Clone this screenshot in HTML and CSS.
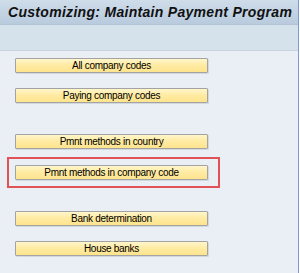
FILE: index.html
```
<!doctype html>
<html lang="en">
	<head>
		<meta charset="UTF-8" />
		<title>Customizing: Maintain Payment Program</title>
		<link rel="stylesheet" href="styles.css">
	</head>
	<body>
		<section class="window">
			<header class="title-bar">
				<h1>Customizing: Maintain Payment Program</h1>
			</header>
			<div class="toolbar"></div>
			<div class="content">
				<button class="btn first">All company codes</button>
				<button class="btn second">Paying company codes</button>
				<button class="btn group">Pmnt methods in country</button>
				<div class="highlight">
					<button class="btn">Pmnt methods in company code</button>
				</div>
				<button class="btn group-after">Bank determination</button>
				<button class="btn second">House banks</button>
			</div>
		</section>
	</body>
</html>
```
FILE: styles.css
```
*{
	margin: 0;
	padding: 0;
	box-sizing: border-box;
}
body{
	background: #fff;
	width: 300px;
	height: 273px;
	overflow: hidden;
}
.window{
	width: 299px;
	height: 273px;
	border-right: 1px solid #7e9ad6;
	background: #eaeff5;
	font-family: "Liberation Sans", Arial, sans-serif;
}
.title-bar{
	height: 25px;
	background: linear-gradient(#cfdcea, #b8cbdd);
	border-bottom: 1px solid #b0c2d4;
	padding-left: 8px;
	display: flex;
	align-items: center;
}
.title-bar h1{
	font-size: 14px;
	font-weight: bold;
	font-style: italic;
	letter-spacing: 0.3px;
	color: #111;
	white-space: nowrap;
}
.toolbar{
	height: 26px;
	background: #d5e1eb;
	border-bottom: 1px solid #c7d4e0;
}
.content{
	display: flex;
	flex-direction: column;
	align-items: flex-start;
	padding: 7px 0 0 15px;
}
.btn{
	display: block;
	width: 193px;
	height: 15px;
	border: 1px solid #a3a3a3;
	border-radius: 1px;
	background: linear-gradient(#fff6cc, #ffeba3 45%, #fde48e);
	box-shadow: 1px 1px 0 #d2d8de;
	font-family: "Liberation Sans", Arial, sans-serif;
	font-size: 10px;
	letter-spacing: -0.3px;
	line-height: 13px;
	color: #000;
	text-align: center;
}
.btn.second{
	margin-top: 15px;
}
.btn.group{
	margin-top: 31px;
}
.highlight{
	margin: 8px 0 0 -8px;
	padding: 6px 10px 6px 6px;
	border: 2px solid #e05258;
}
.btn.group-after{
	margin-top: 23px;
}
```
